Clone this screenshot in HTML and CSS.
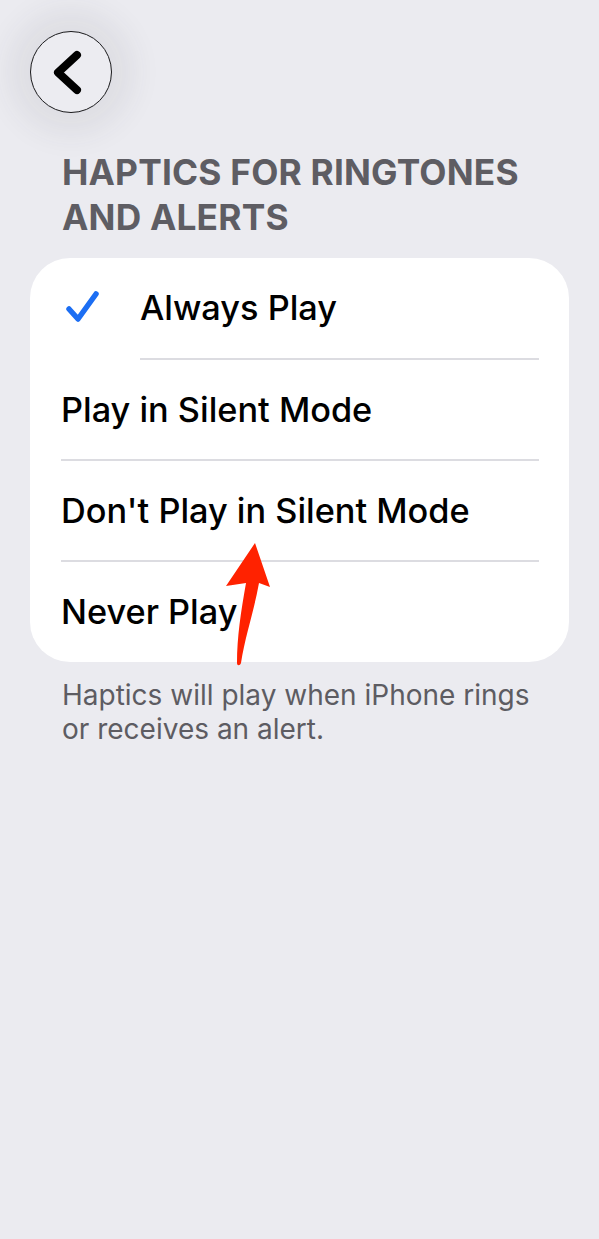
FILE: index.html
```html
<!DOCTYPE html>
<html lang="en">
<head>
<meta charset="utf-8">
<title>Haptics</title>
<link rel="stylesheet" href="styles.css">
</head>
<body>
<div class="screen">
  <button class="back" aria-label="Back">
    <svg width="82" height="82" viewBox="0 0 82 82">
      <path d="M47 24 L28 41.5 L47 59" fill="none" stroke="#000" stroke-width="8" stroke-linecap="round" stroke-linejoin="round"/>
    </svg>
  </button>

  <h1 class="section-title">HAPTICS FOR RINGTONES AND ALERTS</h1>

  <ul class="options">
    <li class="option checked">
      <span class="check">
        <svg width="36" height="34" viewBox="0 0 36 34">
          <path d="M4 20 L13 30 L31 5" fill="none" stroke="#1c6ef3" stroke-width="5.5" stroke-linecap="round" stroke-linejoin="round"/>
        </svg>
      </span>
      <span class="label">Always Play</span>
    </li>
    <li class="option"><span class="label">Play in Silent Mode</span></li>
    <li class="option"><span class="label">Don't Play in Silent Mode</span></li>
    <li class="option"><span class="label">Never Play</span></li>
  </ul>

  <p class="footnote">Haptics will play when iPhone rings or receives an alert.</p>

  <svg class="pointer" width="60" height="130" viewBox="0 0 60 130">
    <path d="M42 2 L57 46 L46 42 C41 70 32 96 28 122 C27 125 24 125 24 122 C24 96 28 70 33 42 L13 45 Z" fill="#ff2200"/>
  </svg>
</div>
</body>
</html>
```

FILE: styles.css
```css
* { box-sizing: border-box; }

html, body {
  margin: 0;
  padding: 0;
}

body {
  background: #ebebf0;
  font-family: Inter, "Noto Sans", "Liberation Sans", sans-serif;
  -webkit-font-smoothing: antialiased;
}

.screen {
  position: relative;
  width: 599px;
  min-height: 1239px;
  padding: 31px 30px 0 30px;
}

.back {
  display: block;
  width: 82px;
  height: 82px;
  padding: 0;
  border: 1.5px solid #1a1a1c;
  border-radius: 50%;
  background: #ececf1;
  box-shadow: 0 0 30px 22px rgba(60, 60, 70, 0.07);
  cursor: pointer;
}

.back svg {
  display: block;
  margin: -1.5px;
}

.section-title {
  margin: 37px 0 0 32px;
  font-size: 35.3px;
  line-height: 45px;
  font-weight: 700;
  color: #5e5d63;
  letter-spacing: 0.2px;
  width: 490px;
}

.options {
  list-style: none;
  margin: 18px 0 0 0;
  padding: 0;
  background: #fff;
  border-radius: 40px;
  overflow: hidden;
}

.option {
  position: relative;
  display: flex;
  align-items: center;
  height: 101px;
  padding-left: 31px;
  font-size: 34.3px;
  font-weight: 500;
  color: #000;
}

.option + .option::before {
  content: "";
  position: absolute;
  top: -1px;
  left: 31px;
  right: 30px;
  height: 2px;
  background: #dcdce1;
}

.option.checked + .option::before {
  left: 110px;
}

.option.checked .check {
  display: flex;
  width: 79px;
  margin-top: -6px;
  padding-left: 4px;
}

.option.checked .label {
  margin-top: -2px;
}

.footnote {
  margin: 16px 0 0 32px;
  font-size: 28px;
  line-height: 34px;
  color: #5d5c62;
  width: 485px;
}

.pointer {
  position: absolute;
  left: 213px;
  top: 541px;
}
```
